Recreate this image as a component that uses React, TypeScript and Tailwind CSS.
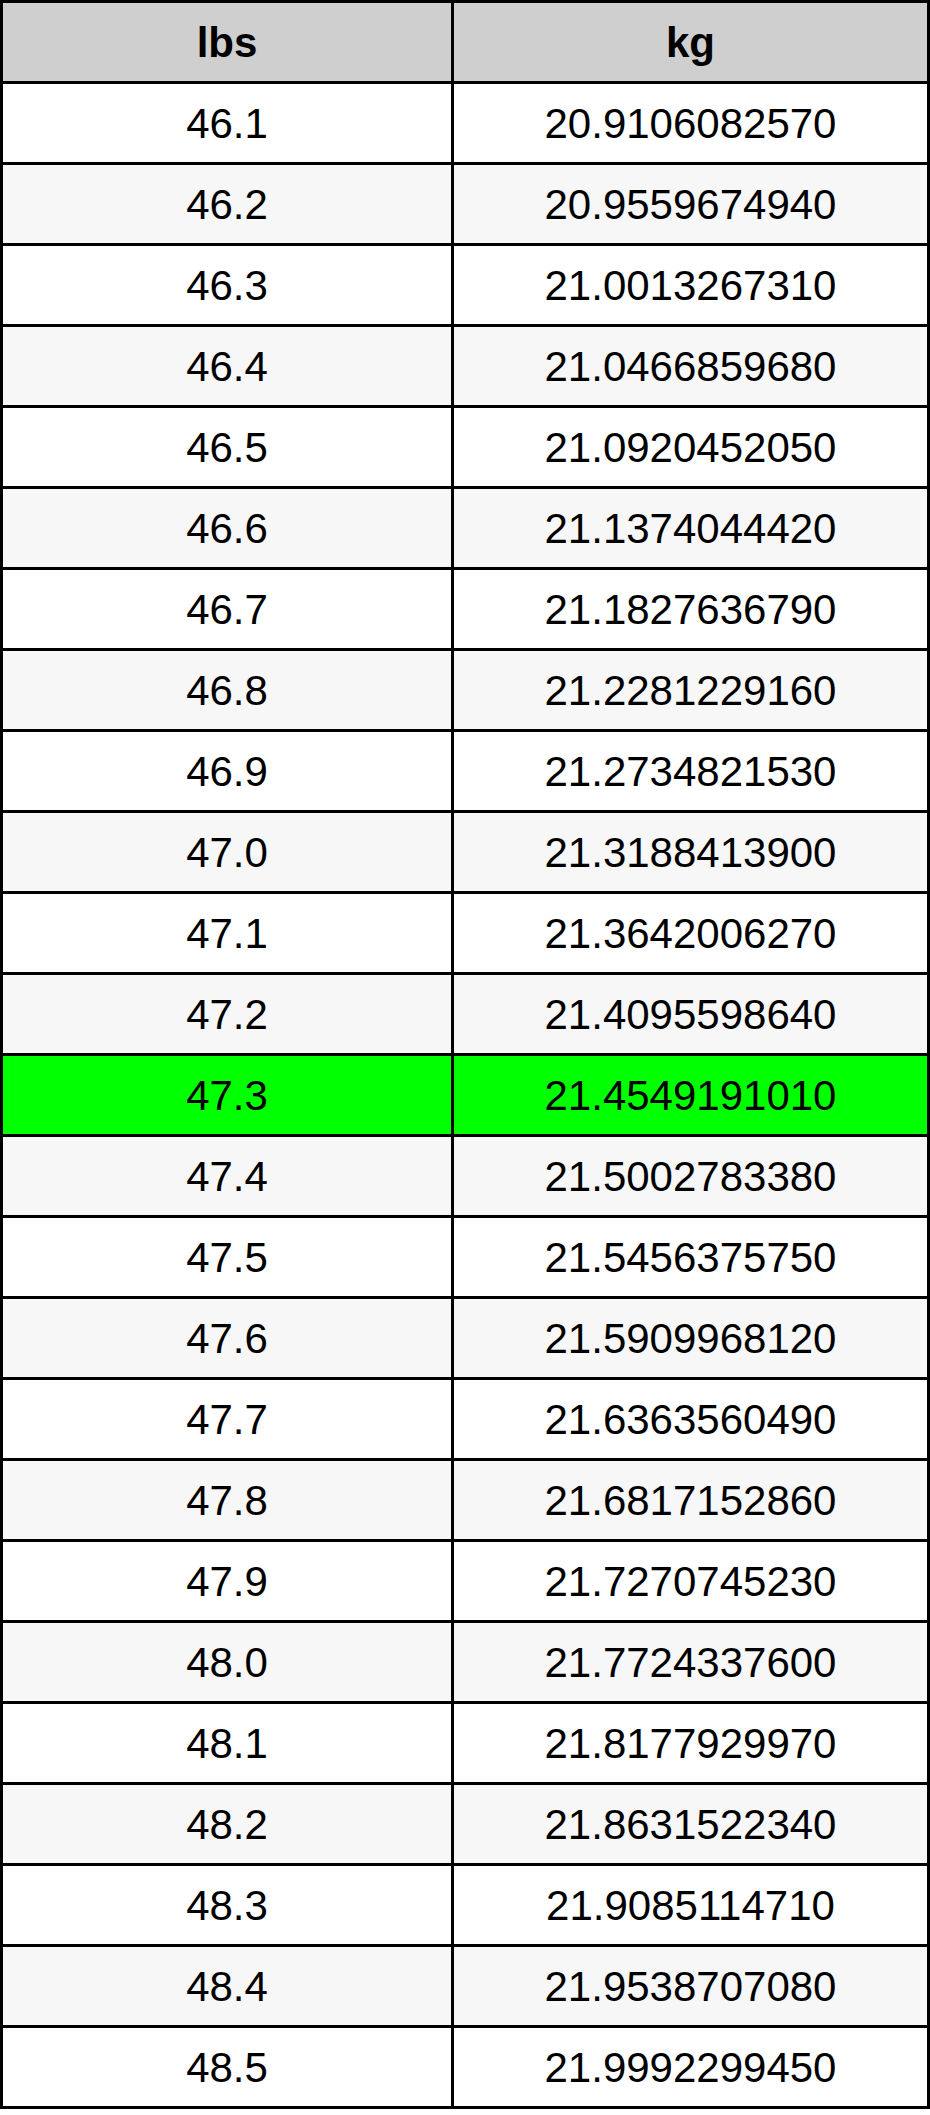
const rows: [string, string][] = [
  ['46.1', '20.9106082570'],
  ['46.2', '20.9559674940'],
  ['46.3', '21.0013267310'],
  ['46.4', '21.0466859680'],
  ['46.5', '21.0920452050'],
  ['46.6', '21.1374044420'],
  ['46.7', '21.1827636790'],
  ['46.8', '21.2281229160'],
  ['46.9', '21.2734821530'],
  ['47.0', '21.3188413900'],
  ['47.1', '21.3642006270'],
  ['47.2', '21.4095598640'],
  ['47.3', '21.4549191010'],
  ['47.4', '21.5002783380'],
  ['47.5', '21.5456375750'],
  ['47.6', '21.5909968120'],
  ['47.7', '21.6363560490'],
  ['47.8', '21.6817152860'],
  ['47.9', '21.7270745230'],
  ['48.0', '21.7724337600'],
  ['48.1', '21.8177929970'],
  ['48.2', '21.8631522340'],
  ['48.3', '21.9085114710'],
  ['48.4', '21.9538707080'],
  ['48.5', '21.9992299450'],
];

export default function App() {
  return (
    <div className="w-[930px] bg-white font-['Liberation_Sans',Arial,sans-serif] text-[42px] text-black">
      <div className="border-[3px] border-black">
        <div className="flex h-[78px] bg-[#cfcfcf] font-bold">
          <div className="flex w-[448px] items-center justify-center">lbs</div>
          <div className="flex flex-1 items-center justify-center border-l-[3px] border-black">kg</div>
        </div>
        {rows.map(([lbs, kg], i) => {
          const bg = lbs === '47.3' ? 'bg-[#00ff00]' : i % 2 === 1 ? 'bg-[#f7f7f7]' : 'bg-white';
          return (
            <div key={lbs} className={`flex h-[81px] border-t-[3px] border-black ${bg}`}>
              <div className="flex w-[448px] items-center justify-center">{lbs}</div>
              <div className="flex flex-1 items-center justify-center border-l-[3px] border-black">{kg}</div>
            </div>
          );
        })}
      </div>
    </div>
  );
}
